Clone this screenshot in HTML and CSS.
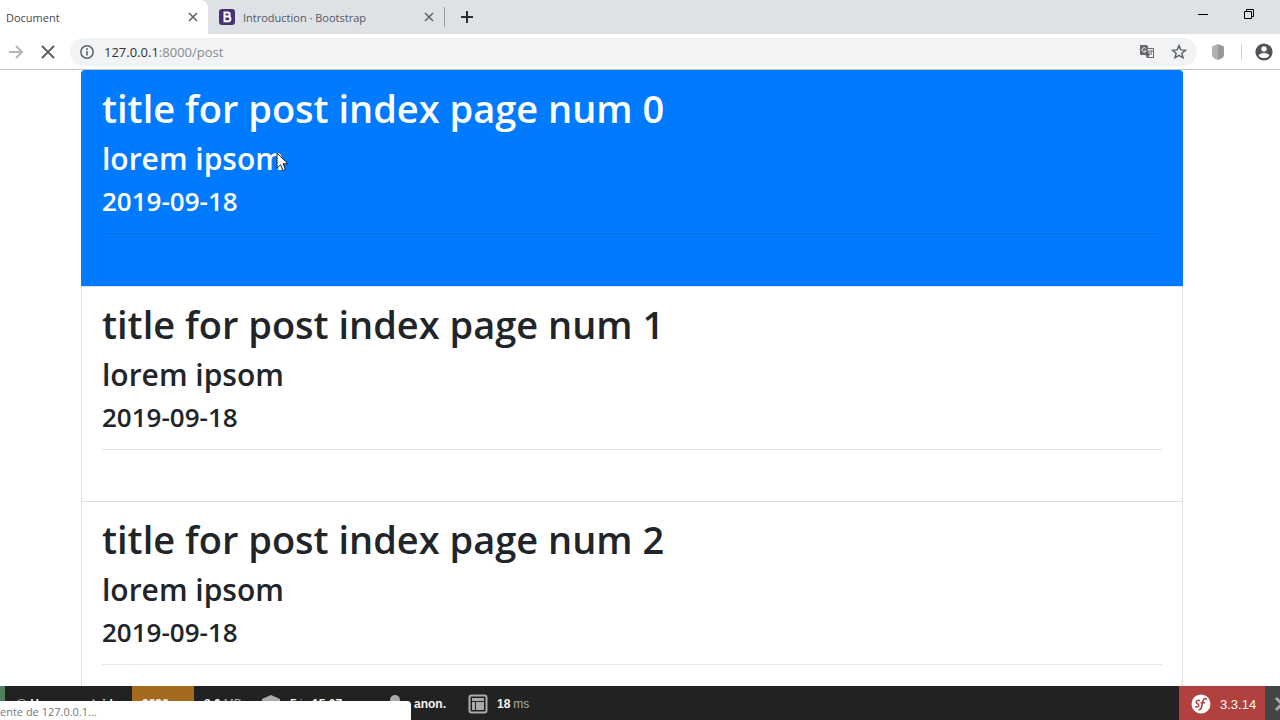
FILE: index.html
```html
<!DOCTYPE html>
<html lang="en">
<head>
    <meta charset="UTF-8">
    <meta name="viewport" content="width=device-width, initial-scale=1.0">
    <title>Document</title>
    <link rel="stylesheet" href="styles.css">
</head>
<body>

<header class="browser">
    <div class="tabs">
        <div class="tab active">
            <span class="tab-title">Document</span>
            <button class="tab-close" aria-label="Close tab"><svg width="10" height="10" viewBox="0 0 10 10"><path d="M1 1l8 8M9 1L1 9"/></svg></button>
        </div>
        <div class="tab">
            <svg class="favicon" width="16" height="16" viewBox="0 0 16 16"><rect width="16" height="16" rx="3" fill="#4b2f73"/><path d="M5.500 3.500h3.200a2 2 0 0 1 0 4H5.500zM5.500 7.500h3.500a2.300 2.300 0 0 1 0 4.800H5.500z" fill="none" stroke="#fff" stroke-width="2"/></svg>
            <span class="tab-title">Introduction · Bootstrap</span>
            <button class="tab-close" aria-label="Close tab"><svg width="10" height="10" viewBox="0 0 10 10"><path d="M1 1l8 8M9 1L1 9"/></svg></button>
        </div>
        <button class="new-tab" aria-label="New tab"><svg width="14" height="14" viewBox="0 0 14 14"><path d="M7 1v12M1 7h12" stroke="#2b2d31" stroke-width="2"/></svg></button>
        <div class="window-buttons">
            <button aria-label="Minimize"><svg width="12" height="12" viewBox="0 0 12 12"><path d="M1 6.500h10" stroke="#000"/></svg></button>
            <button aria-label="Restore"><svg width="12" height="12" viewBox="0 0 12 12"><path d="M1.500 3.500h7v7h-7zM3.500 3V1.500h7v7H9" fill="none" stroke="#000"/></svg></button>
        </div>
    </div>
    <div class="toolbar">
        <button class="nav-button" aria-label="Forward"><svg width="16" height="16" viewBox="0 0 16 16"><path d="M1 8h13M8 2l6 6-6 6" fill="none" stroke="#b4b5b8" stroke-width="2"/></svg></button>
        <button class="nav-button" aria-label="Stop"><svg width="14" height="14" viewBox="0 0 14 14"><path d="M1 1l12 12M13 1L1 13" stroke="#5f6368" stroke-width="2"/></svg></button>
        <div class="address">
            <svg width="14" height="14" viewBox="0 0 14 14"><circle cx="7" cy="7" r="6.200" fill="none" stroke="#5f6368" stroke-width="1.500"/><path d="M7 6v4.500M7 3.300v1.600" stroke="#5f6368" stroke-width="1.600"/></svg>
            <div class="url"><span class="host">127.0.0.1</span>:8000/post</div>
            <button aria-label="Translate"><svg width="16" height="16" viewBox="0 0 16 16"><path d="M1 1h7l1.500 3H14a1 1 0 0 1 1 1v9H8l-1.500-3H2a1 1 0 0 1-1-1z" fill="#65676c"/><path d="M8.500 5H14v8H9.500l1-2z" fill="#f1f3f4"/><path d="M7 4.500A2.200 2.200 0 1 0 7.200 7H5" fill="none" stroke="#f1f3f4"/><path d="M9.500 7H14M11.700 6v1M13 7c-.5 2-1.500 3-3 4M10.500 8l2.500 3" fill="none" stroke="#777"/></svg></button>
            <button aria-label="Bookmark this page"><svg width="16" height="16" viewBox="0 0 16 16"><path d="M8 1.600l1.800 4.300 4.600.4-3.500 3 1.100 4.500L8 11.400l-4 2.400 1.100-4.500-3.500-3 4.600-.4z" fill="none" stroke="#5f6368" stroke-width="1.500"/></svg></button>
        </div>
        <button class="shield" aria-label="Extension"><svg width="14" height="16" viewBox="0 0 14 16"><path d="M7 0l6 2.500v8.500C13 13 10.500 15 7 16z" fill="#999"/><path d="M7 0L1 2.500v8.500C1 13 3.500 15 7 16z" fill="#b0b0b0"/></svg></button>
        <span class="divider"></span>
        <button aria-label="Profile"><svg width="18" height="18" viewBox="0 0 18 18"><circle cx="9" cy="9" r="8.600" fill="#505357"/><circle cx="9" cy="6" r="2.700" fill="#fff"/><path d="M3.700 12.400C5.500 9.200 12.500 9.200 14.300 12.400 12 16 6 16 3.700 12.400z" fill="#fff"/></svg></button>
    </div>
</header>

<main class="page">
    <div class="list-group">
        <a href="#" class="list-group-item active">
            <h1>title for post index page num 0</h1>
            <h2>lorem ipsom</h2>
            <h3>2019-09-18</h3>
            <hr>
        </a>
        <a href="#" class="list-group-item">
            <h1>title for post index page num 1</h1>
            <h2>lorem ipsom</h2>
            <h3>2019-09-18</h3>
            <hr>
        </a>
        <a href="#" class="list-group-item">
            <h1>title for post index page num 2</h1>
            <h2>lorem ipsom</h2>
            <h3>2019-09-18</h3>
            <hr>
        </a>
    </div>
</main>

<footer class="sf-toolbar">
    <div class="sf-block sf-status"></div>
    <div class="sf-block sf-route"><span>@</span> <b>Home_post_id</b></div>
    <div class="sf-block sf-time"><b>3396</b> <span>ms</span></div>
    <div class="sf-block sf-memory"><b>8.0</b> <span>MB</span></div>
    <div class="sf-block sf-ajax"><svg width="20" height="20" viewBox="0 0 20 20"><path d="M10 1l9 4v10l-9 4-9-4V5z" fill="#aaa"/></svg><b>5</b> <span>in</span> <b>15.07</b></div>
    <div class="sf-block sf-user"><svg width="20" height="20" viewBox="0 0 20 20"><circle cx="10" cy="6" r="5" fill="#aaa"/><path d="M1 20c0-10 18-10 18 0z" fill="#aaa"/></svg><b>anon.</b></div>
    <div class="sf-block"><svg width="20" height="20" viewBox="0 0 20 20"><rect x="1.500" y="1.500" width="17" height="17" rx="2" fill="none" stroke="#aaa" stroke-width="2"/><path d="M4 4h12v3H4zM4 8h3v8H4zM8 8h8v8H8z" fill="#aaa"/></svg><b>18</b> <span>ms</span></div>
    <div class="sf-block sf-version"><svg width="20" height="20" viewBox="0 0 20 20"><circle cx="10" cy="10" r="9.500" fill="#fff"/><path d="M9 7C7 5.500 4.500 7 5.500 8.700c.8 1.100 2.700 1.500 2.300 3.200-.4 1.600-3 1.600-3.300.2M15.800 5.500C13.500 3 12 6 11.400 9c-.7 4-1.400 7.500-3.800 6.500M9.500 8.800h4.500" fill="none" stroke="#b0413e" stroke-width="1.500"/></svg><span>3.3.14</span></div>
    <button class="sf-close" aria-label="Close toolbar"><svg width="16" height="16" viewBox="0 0 16 16"><path d="M2 2l12 12M14 2L2 14" stroke="#aaa" stroke-width="3"/></svg></button>
</footer>

<div class="status-bubble"><span>ente de 127.0.0.1...</span></div>

<svg class="cursor" width="13" height="20" viewBox="0 0 13 20"><path d="M1 1v15l3.500-3.300L7 18.500l2.500-1-2.500-5.700h5z" fill="#fff" stroke="#222"/></svg>

</body>
</html>
```

FILE: styles.css
```css
* {
    box-sizing: border-box;
}
body {
    margin: 0;
    height: 100vh;
    overflow: hidden;
    font-family: "Open Sans", "Noto Sans", sans-serif;
    color: #212529;
    background-color: white;
}
button {
    display: flex;
    align-items: center;
    justify-content: center;
    padding: 0;
    border: none;
    background: none;
    cursor: pointer;
}
svg {
    flex: none;
}
.browser {
    font-size: 11px;
    border-bottom: 1px solid #bfc1c5;
}
.tabs {
    display: flex;
    align-items: center;
    height: 34px;
    background-color: #dee1e6;
}
.tab {
    display: flex;
    align-items: center;
    width: 237px;
    height: 20px;
    padding: 0 10px 0 11px;
    border-right: 1px solid #9a9da2;
    color: #55585d;
}
.tab.active {
    width: 208px;
    height: 34px;
    padding: 0 10px 0 6px;
    border: none;
    border-radius: 0 8px 0 0;
    background-color: white;
    color: #45484c;
}
.tab-title {
    flex: 1;
}
.favicon {
    margin-right: 8px;
}
.tab-close path {
    stroke: #5f6368;
    stroke-width: 1.6;
}
.new-tab {
    margin-left: 15px;
}
.window-buttons {
    display: flex;
    gap: 34px;
    height: 28px;
    margin-left: auto;
    margin-right: 25px;
    margin-bottom: 6px;
}
.toolbar {
    display: flex;
    align-items: center;
    height: 35px;
    padding: 0 7px;
    background-color: white;
}
.nav-button {
    width: 18px;
    margin-right: 14px;
}
.nav-button + .nav-button {
    margin-right: 13px;
}
.address {
    display: flex;
    flex: 1;
    align-items: center;
    gap: 16px;
    height: 28px;
    padding: 0 10px;
    border-radius: 14px;
    background-color: #f1f3f4;
}
.url {
    flex: 1;
    margin-left: -6px;
    font-size: 13px;
    color: #888b90;
}
.host {
    color: #303236;
}
.shield {
    margin-left: 14px;
}
.divider {
    width: 1px;
    height: 16px;
    margin: 0 13px 0 16px;
    background-color: #d0d2d5;
}
.page {
    padding-right: 16px;
}
.list-group {
    max-width: 1102px;
    margin: 0 auto;
}
.list-group-item {
    display: block;
    padding: 12px 20px 51px;
    border: 1px solid #dfdfdf;
    border-bottom: none;
    color: #212529;
    text-decoration: none;
}
.list-group-item.active {
    padding-bottom: 52px;
    border-color: #007bff;
    border-radius: 4px 4px 0 0;
    background-color: #007bff;
    color: white;
}
h1, h2, h3 {
    margin: 0;
    font-weight: 600;
}
h1 {
    margin-bottom: 7px;
    font-size: 38px;
    line-height: 50px;
}
h2 {
    margin-bottom: 7px;
    font-size: 30px;
    line-height: 38px;
}
h3 {
    margin-bottom: 16px;
    font-size: 26px;
    line-height: 32px;
}
hr {
    margin: 0;
    border: none;
    border-top: 1px solid rgba(0, 0, 0, 0.1);
}
.sf-toolbar {
    position: fixed;
    left: 0;
    right: 0;
    bottom: 0;
    display: flex;
    height: 34px;
    background-color: #222;
    color: #aaa;
    font: 12px "Liberation Sans", Arial, sans-serif;
}
.sf-block {
    display: flex;
    align-items: center;
    gap: 3px;
    padding: 2px 10px 0;
}
.sf-block svg {
    margin-right: 6px;
}
.sf-block b {
    color: #f5f5f5;
}
.sf-status {
    width: 5px;
    padding: 0;
    background-color: #4f805d;
}
.sf-route {
    width: 127px;
}
.sf-time {
    width: 62px;
    background-color: #a46a1f;
}
.sf-memory {
    width: 67px;
}
.sf-ajax {
    padding: 2px 0 0;
    width: 114px;
}
.sf-user {
    width: 83px;
}
.sf-version {
    width: 86px;
    margin-left: auto;
    padding-left: 12px;
    background-color: #b0413e;
    color: white;
    font-size: 13px;
}
.sf-close {
    width: 15px;
    padding: 2px 0 0 9px;
    background-color: #444;
    overflow: hidden;
    justify-content: flex-start;
}
.status-bubble {
    position: fixed;
    left: 0;
    bottom: 0;
    width: 411px;
    height: 19px;
    border-radius: 0 4px 0 0;
    background-color: white;
    color: #777;
    font-size: 11px;
    line-height: 21px;
}
.cursor {
    position: absolute;
    left: 276px;
    top: 152px;
}
```
